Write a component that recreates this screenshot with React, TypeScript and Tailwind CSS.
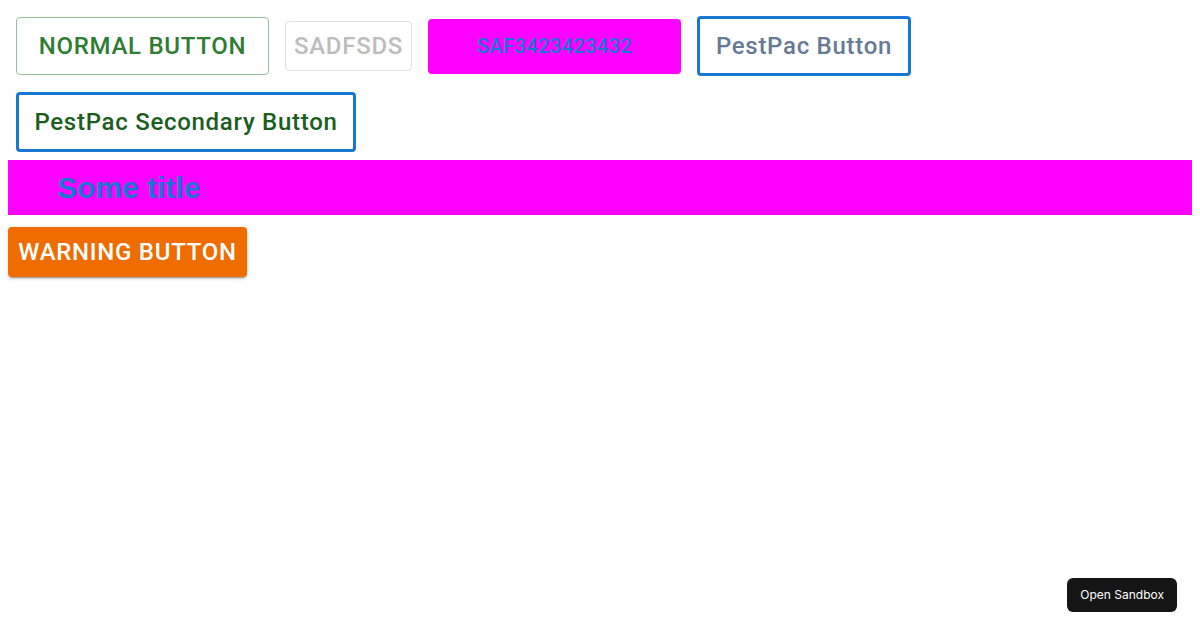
const roboto = "font-['Roboto',sans-serif] font-medium";

export default function App() {
  return (
    <div className="min-h-screen bg-white p-2">
      {/* Button row */}
      <div className="flex flex-wrap items-center">
        <button
          className={`${roboto} m-2 h-[58px] w-[253px] rounded border border-[#97bf99] text-[24px] uppercase tracking-[0.03em] text-[#2e7d32]`}
        >
          Normal Button
        </button>
        <button
          disabled
          className={`${roboto} m-2 h-[50px] w-[127px] rounded border border-[#e0e0e0] text-[24px] uppercase tracking-[0.03em] text-[#bdbdbd]`}
        >
          sadfsds
        </button>
        <button
          className={`${roboto} m-2 h-[55px] w-[253px] rounded bg-[#ff00ff] text-[20px] uppercase tracking-[0.02em] text-[#1976d2]`}
        >
          saf3423423432
        </button>
        <button
          className={`${roboto} m-2 h-[60px] w-[214px] rounded border-[3px] border-[#1976d2] text-[24px] tracking-[0.03em] text-[#677a94]`}
        >
          PestPac Button
        </button>
        <button
          className={`${roboto} m-2 h-[60px] w-[340px] rounded border-[3px] border-[#1976d2] text-[24px] tracking-[0.03em] text-[#1b5e20]`}
        >
          PestPac Secondary Button
        </button>
      </div>

      {/* Title bar */}
      <div className="flex h-[55px] items-center bg-[#ff00ff] pl-[49px]">
        <h2 className="font-['Liberation_Sans',Arial,sans-serif] text-[30px] font-bold text-[#1976d2]">
          Some title
        </h2>
      </div>

      {/* Warning */}
      <button
        className={`${roboto} mt-3 h-[50px] w-[239px] rounded bg-[#ef6c00] text-[24px] uppercase tracking-[0.03em] text-white shadow-[0_3px_1px_-2px_rgba(0,0,0,0.2),0_2px_2px_0_rgba(0,0,0,0.14),0_1px_5px_0_rgba(0,0,0,0.12)]`}
      >
        Warning Button
      </button>

      <a className="fixed bottom-[18px] right-[23px] flex h-[34px] items-center rounded-md bg-[#151515] px-[13px] font-['Inter',sans-serif] text-[12px] text-white">
        Open Sandbox
      </a>
    </div>
  );
}
